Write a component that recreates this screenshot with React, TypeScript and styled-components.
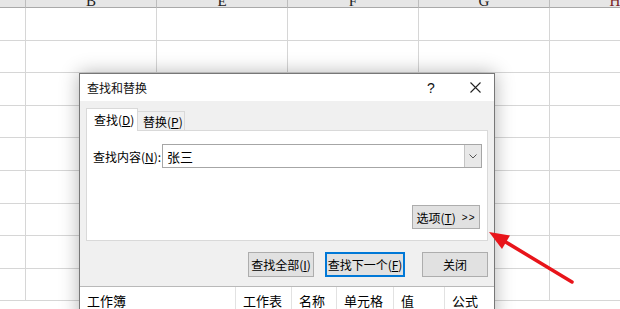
import styled, { createGlobalStyle } from "styled-components";

const GlobalStyle = createGlobalStyle`
  html, body { margin: 0; padding: 0; }
  body {
    background: #fff;
    font-family: "Noto Sans CJK SC", "Noto Sans", sans-serif;
    color: #000;
  }
`;

const Page = styled.div`
  position: relative;
  width: 620px;
  height: 309px;
  overflow: hidden;
  background: #fff;
`;

const Sheet = styled.div`
  display: grid;
  grid-template-columns: 26px repeat(5, 131px);
  grid-template-rows: 8px repeat(9, 32.6px);
`;

const HeadCell = styled.div<{ $red?: boolean }>`
  box-sizing: border-box;
  background: #e6e6e6;
  border-right: 1px solid #bdbdbd;
  border-bottom: 1px solid #a9a9a9;
  display: flex;
  align-items: flex-end;
  justify-content: center;
  overflow: hidden;
  font-family: "Liberation Serif", serif;
  font-size: 15px;
  line-height: 15px;
  color: ${(p) => (p.$red ? "#7a2424" : "#222")};
  span { margin-bottom: -2px; }
`;

const Cell = styled.div`
  box-sizing: border-box;
  border-right: 1px solid #d6d6d6;
  border-bottom: 1px solid #d6d6d6;
`;

const Dialog = styled.div`
  position: absolute;
  left: 79px;
  top: 73px;
  width: 416px;
  height: 250px;
  box-sizing: border-box;
  border: 1px solid #777;
  background: #f0f0f0;
  box-shadow: 0 0 18px rgba(0, 0, 0, 0.3);
  display: flex;
  flex-direction: column;
  font-size: 12px;
`;

const TitleBar = styled.div`
  height: 27px;
  background: #fff;
  display: flex;
  align-items: center;
  padding-left: 7px;
  font-size: 12px;
  color: #111;
`;

const Title = styled.div`
  flex: 1;
`;

const Help = styled.div`
  width: 20px;
  text-align: center;
  font-family: "Liberation Sans", sans-serif;
  font-size: 14px;
  margin-right: 24px;
`;

const Close = styled.div`
  width: 20px;
  display: flex;
  justify-content: center;
  margin-right: 9px;
`;

const Body = styled.div`
  padding: 0 6px;
  display: flex;
  flex-direction: column;
`;

const Tabs = styled.div`
  display: flex;
  align-items: flex-end;
  height: 23px;
  margin-top: 7px;
  margin-bottom: -1px;
  position: relative;
  z-index: 1;
`;

const Tab = styled.div<{ $active?: boolean }>`
  box-sizing: border-box;
  height: ${(p) => (p.$active ? "23px" : "20px")};
  width: ${(p) => (p.$active ? "52px" : "47px")};
  border: 1px solid #d9d9d9;
  border-bottom: ${(p) => (p.$active ? "none" : "1px solid #d9d9d9")};
  border-left: ${(p) => (p.$active ? "1px solid #d9d9d9" : "none")};
  background: ${(p) => (p.$active ? "#fff" : "#f0f0f0")};
  display: flex;
  align-items: center;
  padding-left: ${(p) => (p.$active ? "7px" : "5px")};
  padding-bottom: ${(p) => (p.$active ? "2px" : "0")};
  font-size: 12px;
`;

const Panel = styled.div`
  box-sizing: border-box;
  height: 111px;
  border: 1px solid #d9d9d9;
  background: #fff;
  display: flex;
  flex-direction: column;
`;

const FieldRow = styled.div`
  display: flex;
  align-items: center;
  padding: 13px 5px 0 6px;
`;

const Label = styled.div`
  width: 69px;
  font-size: 12px;
`;

const Combo = styled.div`
  flex: 1;
  box-sizing: border-box;
  height: 24px;
  border: 1px solid #a6a6a6;
  display: flex;
  align-items: stretch;
`;

const ComboText = styled.div`
  flex: 1;
  display: flex;
  align-items: center;
  padding-left: 4px;
  font-size: 13px;
`;

const ComboArrow = styled.div`
  width: 16px;
  background: #e8e8e8;
  border-left: 1px solid #c4c4c4;
  display: flex;
  align-items: center;
  justify-content: center;
`;

const Button = styled.div<{ $w: number; $focus?: boolean }>`
  box-sizing: border-box;
  width: ${(p) => p.$w}px;
  height: 25px;
  background: #e1e1e1;
  border: 1px solid ${(p) => (p.$focus ? "#0078d7" : "#adadad")};
  box-shadow: ${(p) => (p.$focus ? "inset 0 0 0 1px #0078d7" : "none")};
  display: flex;
  align-items: center;
  justify-content: center;
  font-size: 12px;
  white-space: nowrap;
`;

const OptionsButton = styled(Button)`
  align-self: flex-end;
  margin: auto 7px 11px 0;
  height: 24px;
  gap: 6px;
`;

const Chevrons = styled.span`
  font-family: "Liberation Sans", sans-serif;
  font-size: 10px;
  letter-spacing: 1px;
`;

const ButtonRow = styled.div`
  display: flex;
  justify-content: flex-end;
  margin-top: 11px;
`;

const ResultHead = styled.div`
  display: grid;
  grid-template-columns: 156px 56px 45px 57px 51px 1fr;
  margin-top: 9px;
  height: 26px;
  background: #fff;
  border-top: 1px solid #b9b9b9;
`;

const HeadLabel = styled.div<{ $last?: boolean }>`
  box-sizing: border-box;
  padding-left: 7px;
  display: flex;
  align-items: center;
  font-size: 13px;
  border-right: ${(p) => (p.$last ? "none" : "1px solid #e2e2e2")};
`;

const Arrow = styled.svg`
  position: absolute;
  left: 480px;
  top: 220px;
`;

const columns = ["", "B", "E", "F", "G", "H"];
const resultCols = ["工作簿", "工作表", "名称", "单元格", "值", "公式"];

export default function App() {
  return (
    <Page>
      <GlobalStyle />
      <Sheet>
        {columns.map((c, i) => (
          <HeadCell key={c + i} $red={c === "H"}>
            <span>{c}</span>
          </HeadCell>
        ))}
        {Array.from({ length: 9 * 6 }).map((_, i) => (
          <Cell key={i} />
        ))}
      </Sheet>

      <Dialog>
        <TitleBar>
          <Title>查找和替换</Title>
          <Help>?</Help>
          <Close>
            <svg width="11" height="11" viewBox="0 0 11 11">
              <path d="M0.5 0.5 L10.5 10.5 M10.5 0.5 L0.5 10.5" stroke="#222" strokeWidth="1.1" />
            </svg>
          </Close>
        </TitleBar>
        <Body>
          <Tabs>
            <Tab $active>
              查找(<u>D</u>)
            </Tab>
            <Tab>
              替换(<u>P</u>)
            </Tab>
          </Tabs>
          <Panel>
            <FieldRow>
              <Label>
                查找内容(<u>N</u>):
              </Label>
              <Combo>
                <ComboText>张三</ComboText>
                <ComboArrow>
                  <svg width="8" height="5" viewBox="0 0 8 5">
                    <path d="M0.5 0.5 L4 4 L7.5 0.5" stroke="#555" fill="none" strokeWidth="1" />
                  </svg>
                </ComboArrow>
              </Combo>
            </FieldRow>
            <OptionsButton $w={68}>
              <span>
                选项(<u>T</u>)
              </span>
              <Chevrons>&gt;&gt;</Chevrons>
            </OptionsButton>
          </Panel>
          <ButtonRow>
            <Button $w={66}>
              查找全部(<u>I</u>)
            </Button>
            <Button $w={80} $focus style={{ marginLeft: 11 }}>
              查找下一个(<u>F</u>)
            </Button>
            <Button $w={66} style={{ marginLeft: 17 }}>
              关闭
            </Button>
          </ButtonRow>
        </Body>
        <ResultHead>
          {resultCols.map((c, i) => (
            <HeadLabel key={c} $last={i === resultCols.length - 1}>
              {c}
            </HeadLabel>
          ))}
        </ResultHead>
      </Dialog>

      <Arrow width="100" height="70" viewBox="0 0 100 70">
        <line x1="92" y1="62" x2="24" y2="21" stroke="#e8141a" strokeWidth="3.5" strokeLinecap="round" />
        <polygon points="9,12 30,15.5 22,29" fill="#e8141a" />
      </Arrow>
    </Page>
  );
}
